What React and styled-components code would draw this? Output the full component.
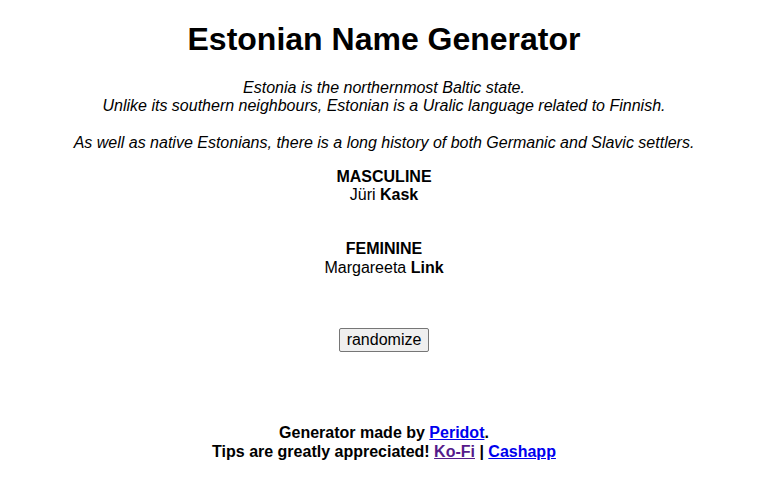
import React from "react";
import styled, { createGlobalStyle } from "styled-components";

const GlobalStyle = createGlobalStyle`
  html, body {
    margin: 0;
    padding: 0;
    background: #ffffff;
  }
  body {
    font-family: "Liberation Sans", Arial, sans-serif;
    color: #000000;
    font-size: 16px;
  }
`;

const Page = styled.main`
  display: flex;
  flex-direction: column;
  align-items: center;
  text-align: center;
  padding-top: 21px;
  line-height: 18.4px;
`;

const Title = styled.h1`
  margin: 0 0 21px;
  font-size: 32px;
  line-height: 37px;
  font-weight: bold;
`;

const Intro = styled.p`
  margin: 0;
  font-style: italic;
`;

const NameBlock = styled.section`
  margin-top: ${(p) => p.$gap}px;
`;

const Label = styled.div`
  font-weight: bold;
`;

const Surname = styled.b`
  font-weight: bold;
`;

const RandomButton = styled.button`
  margin-top: 51px;
  font-family: "Liberation Sans", Arial, sans-serif;
  font-size: 16px;
  line-height: 18px;
  color: #000;
  background: #efefef;
  border: 1px solid #767676;
  border-radius: 2px;
  padding: 2px 7px;
  cursor: pointer;
`;

const Footer = styled.footer`
  margin-top: 72px;
  font-weight: bold;
`;

const Link = styled.a`
  color: ${(p) => (p.$visited ? "#551a8b" : "#0000ee")};
  text-decoration: underline;
`;

export default function App() {
  return (
    <>
      <GlobalStyle />
      <Page>
        <Title>Estonian Name Generator</Title>
        <Intro>
          Estonia is the northernmost Baltic state.
          <br />
          Unlike its southern neighbours, Estonian is a Uralic language related to Finnish.
          <br />
          <br />
          As well as native Estonians, there is a long history of both Germanic and Slavic settlers.
        </Intro>
        <NameBlock $gap={15}>
          <Label>MASCULINE</Label>
          <div>
            Jüri <Surname>Kask</Surname>
          </div>
        </NameBlock>
        <NameBlock $gap={36}>
          <Label>FEMININE</Label>
          <div>
            Margareeta <Surname>Link</Surname>
          </div>
        </NameBlock>
        <RandomButton>randomize</RandomButton>
        <Footer>
          Generator made by <Link href="#">Peridot</Link>.
          <br />
          Tips are greatly appreciated! <Link href="#" $visited>Ko-Fi</Link> |{" "}
          <Link href="#">Cashapp</Link>
        </Footer>
      </Page>
    </>
  );
}
